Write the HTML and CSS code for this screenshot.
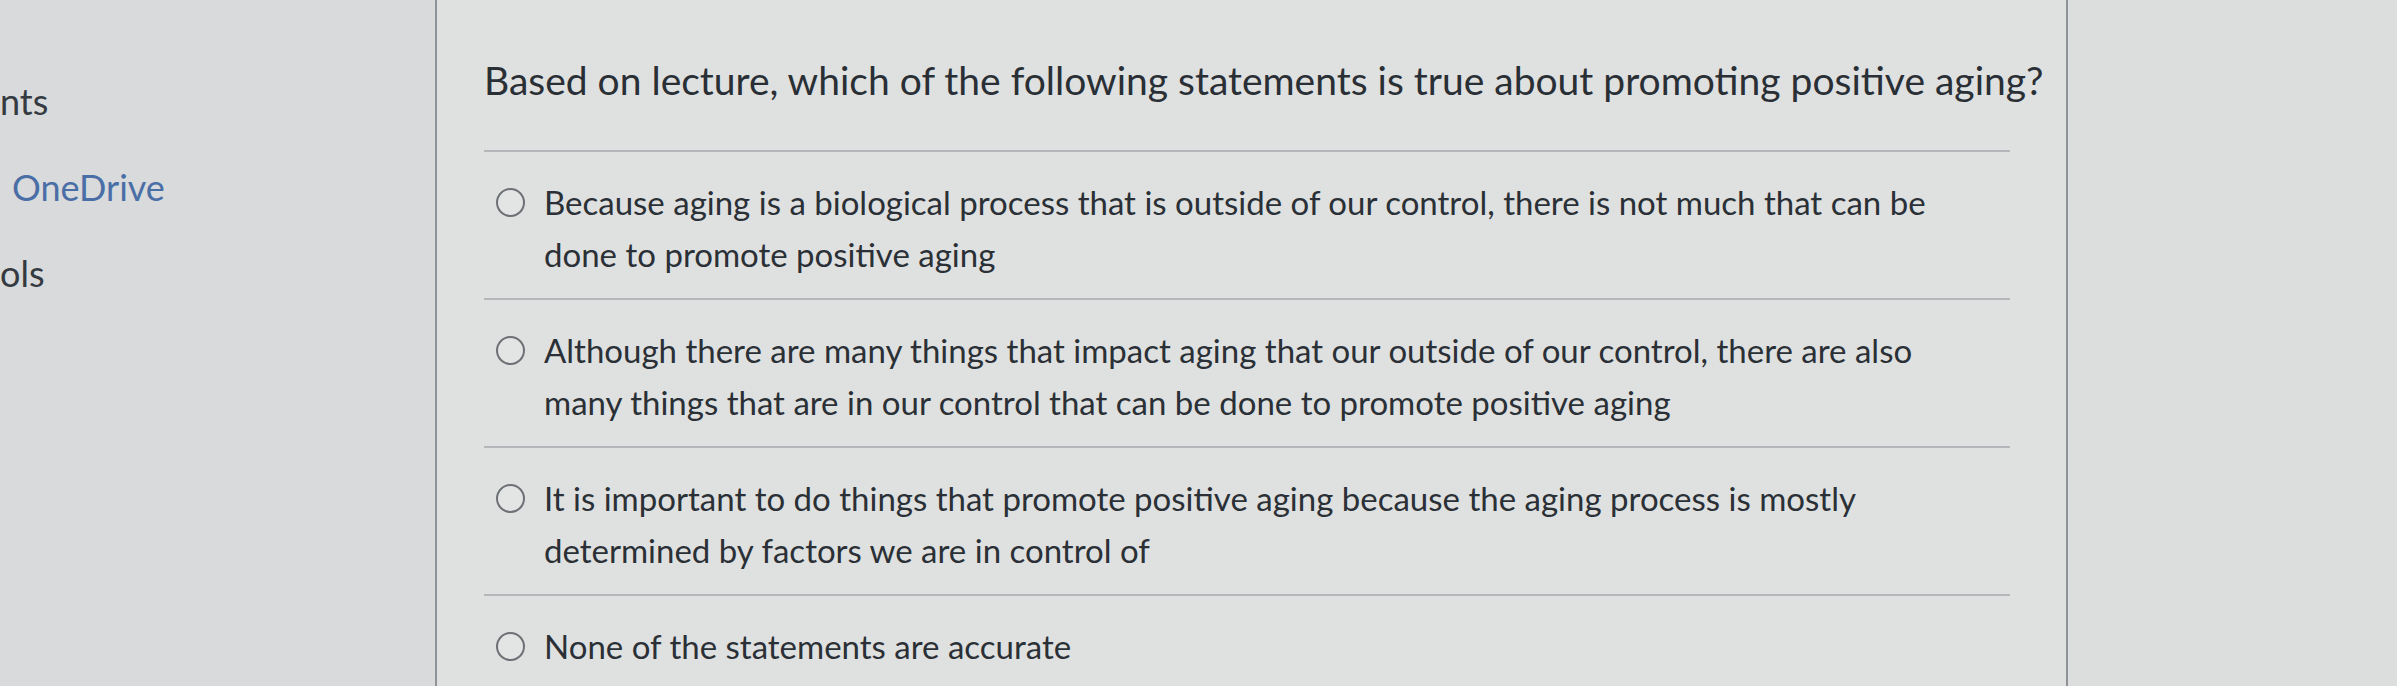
FILE: index.html
```html
<!DOCTYPE html>
<html lang="en">
<head>
<meta charset="utf-8">
<title>Quiz question</title>
<link rel="stylesheet" href="styles.css">
</head>
<body>
<div class="page">
  <nav class="sidebar">
    <a class="nav-item dark">nts</a>
    <a class="nav-item link">OneDrive</a>
    <a class="nav-item dark">ols</a>
  </nav>
  <main class="main">
    <div class="question">Based on lecture, which of the following statements is true about promoting positive aging?</div>
    <div class="answers">
      <label class="answer">
        <span class="radio"></span>
        <span class="answer-text">Because aging is a biological process that is outside of our control, there is not much that can be done to promote positive aging</span>
      </label>
      <label class="answer">
        <span class="radio"></span>
        <span class="answer-text">Although there are many things that impact aging that our outside of our control, there are also many things that are in our control that can be done to promote positive aging</span>
      </label>
      <label class="answer">
        <span class="radio"></span>
        <span class="answer-text">It is important to do things that promote positive aging because the aging process is mostly determined by factors we are in control of</span>
      </label>
      <label class="answer last">
        <span class="radio"></span>
        <span class="answer-text">None of the statements are accurate</span>
      </label>
    </div>
  </main>
  <div class="rest"></div>
</div>
</body>
</html>
```

FILE: styles.css
```css
html, body {
  margin: 0;
  padding: 0;
}
body {
  background: #dcdede;
  font-family: Lato, "Open Sans", "Liberation Sans", sans-serif;
  color: #30363b;
  overflow: hidden;
}
.page {
  display: flex;
  height: 686px;
  width: 2397px;
}
.sidebar {
  width: 437px;
  flex: none;
  border-right: 2px solid #8e9398;
  background: #d8dadb;
  display: flex;
  flex-direction: column;
  padding-top: 58px;
  box-sizing: border-box;
}
.nav-item {
  display: block;
  font-size: 36px;
  line-height: 86px;
  height: 86px;
  text-decoration: none;
  white-space: nowrap;
}
.nav-item.dark {
  color: #343a40;
}
.nav-item.link {
  color: #4a6ea6;
  padding-left: 12px;
}
.main {
  width: 1631px;
  flex: none;
  box-sizing: border-box;
  border-right: 2px solid #8e9398;
  padding-left: 47px;
  padding-top: 56px;
  background: #dfe0e0;
  overflow: hidden;
}
.question {
  font-size: 39px;
  line-height: 48px;
  white-space: nowrap;
  color: #292f35;
  width: 1526px;
  padding-bottom: 46px;
  border-bottom: 2px solid #b4b7b9;
}
.answers {
  width: 1526px;
  display: flex;
  flex-direction: column;
}
.answer {
  display: flex;
  align-items: flex-start;
  padding: 24px 0 18px 12px;
  border-bottom: 2px solid #b4b7b9;
}
.answer.last {
  border-bottom: none;
}
.radio {
  flex: none;
  width: 25px;
  height: 25px;
  border: 2px solid #6d7176;
  border-radius: 50%;
  margin-top: 12px;
  margin-right: 19px;
  background: #e3e4e4;
}
.answer-text {
  font-size: 33px;
  line-height: 52px;
  width: 1410px;
  color: #2a3036;
}
.rest {
  flex: 1;
  background: #dcdede;
}
```
